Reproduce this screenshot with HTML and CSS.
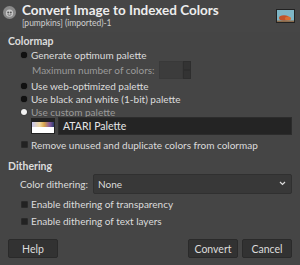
FILE: index.html
```html
<!DOCTYPE html>
<html>
	<head>
		<title>Convert Image to Indexed Colors</title>
		<link rel="stylesheet" href="styles.css">
	</head>
	<body>
		<div class="dialog">
			<div class="head">
				<div class="logo">
					<svg width="13" height="13" viewBox="0 0 13 13">
						<circle cx="6.5" cy="6.5" r="6.5" fill="#8a8a8a"/>
						<circle cx="6.5" cy="7.2" r="3.6" fill="#c9c9c9"/>
						<circle cx="5.2" cy="6.4" r="1" fill="#555"/>
						<circle cx="7.8" cy="6.4" r="1" fill="#555"/>
						<path d="M4.6 8.6 Q6.5 10 8.4 8.6" stroke="#555" stroke-width="0.8" fill="none"/>
					</svg>
				</div>
				<div class="titles">
					<div class="title">Convert Image to Indexed Colors</div>
					<div class="subtitle">[pumpkins] (imported)-1</div>
				</div>
				<div class="thumb">
					<svg width="19" height="14" viewBox="0 0 19 14">
						<rect x="0" y="0" width="19" height="14" fill="#222"/>
						<rect x="1" y="1" width="17" height="12" fill="#7fb6c6"/>
						<ellipse cx="8" cy="9" rx="5" ry="2.8" fill="#c2532a"/>
						<ellipse cx="12" cy="9.5" rx="3" ry="2" fill="#d86e32"/>
						<rect x="1" y="11.5" width="17" height="1.5" fill="#8a6a4a"/>
					</svg>
				</div>
			</div>

			<div class="section">Colormap</div>
			<div class="row radio-row gen"><span class="radio"></span>Generate optimum palette</div>
			<div class="row max-row">
				<span class="dim">Maximum number of colors:</span>
				<span class="spin">
					<span class="spin-field"></span>
					<span class="spin-btns"><span></span><span></span></span>
				</span>
			</div>
			<div class="row radio-row web"><span class="radio"></span>Use web-optimized palette</div>
			<div class="row radio-row"><span class="radio"></span>Use black and white (1-bit) palette</div>
			<div class="row radio-row dim"><span class="radio on"></span>Use custom palette</div>
			<div class="row palette-row">
				<span class="swatch"></span>
				<span class="palette-field">ATARI Palette</span>
			</div>
			<div class="row check-row remove-row"><span class="check"></span>Remove unused and duplicate colors from colormap</div>

			<div class="section dith">Dithering</div>
			<div class="row combo-row">
				<span class="combo-label">Color dithering:</span>
				<span class="combo">None
					<svg width="7" height="5" viewBox="0 0 7 5"><path d="M1 1 L3.5 3.5 L6 1" stroke="#dcdcdc" stroke-width="1.2" fill="none"/></svg>
				</span>
			</div>
			<div class="row check-row transp"><span class="check"></span>Enable dithering of transparency</div>
			<div class="row check-row"><span class="check"></span>Enable dithering of text layers</div>

			<div class="buttons">
				<button type="button">Help</button>
				<div class="spacer"></div>
				<button type="button">Convert</button>
				<button type="button">Cancel</button>
			</div>
		</div>
	</body>
</html>
```

FILE: styles.css
```css
html, body{
	margin:0;
	padding:0;
	background-color:#454545;
}
.dialog{
	width:300px;
	height:265px;
	display:flex;
	flex-direction:column;
	font-family:Lato, "Open Sans", sans-serif;
	font-size:10px;
	color:#dcdcdc;
	box-sizing:border-box;
}
.head{
	display:flex;
	align-items:flex-start;
	padding:3px 5px 0 3px;
	height:32px;
	flex:none;
	box-sizing:border-box;
	background-color:#464646;
}
.logo{
	width:13px;
	height:13px;
	margin-top:3px;
	margin-right:6px;
}
.titles{
	flex:1;
}
.title{
	font-weight:bold;
	font-size:13.5px;
	line-height:15px;
	color:#ededed;
}
.subtitle{
	font-size:8.5px;
	line-height:11px;
	color:#cfcfcf;
}
.thumb{
	margin-top:6px;
}
.section{
	flex:none;
	display:flex;
	align-items:center;
	font-weight:bold;
	font-size:10.5px;
	padding-left:8px;
	height:18px;
}
.dith{
	height:18px;
	align-items:flex-end;
	line-height:14px;
}
.row{
	flex:none;
	display:flex;
	align-items:center;
	padding-left:21px;
	white-space:nowrap;
}
.radio-row{
	height:13px;
}
.gen{
	height:10px;
}
.web{
	height:13px;
}
.radio{
	width:6px;
	height:6px;
	border-radius:50%;
	background-color:#111;
	margin-right:4px;
	box-shadow:0 0 1px #000;
}
.radio.on{
	background-color:#f2f2f2;
}
.dim{
	color:#9a9a9a;
}
.max-row{
	height:19px;
	padding-left:32px;
}
.spin{
	display:flex;
	margin-left:4px;
	height:18px;
}
.spin-field{
	width:22px;
	background-color:#3c3c3c;
	border:1px solid #393939;
}
.spin-btns{
	display:flex;
	flex-direction:column;
	width:8px;
}
.spin-btns span{
	flex:1;
	background-color:#333;
	border:1px solid #2e2e2e;
}
.palette-row{
	padding-left:31px;
	height:16px;
}
.swatch{
	width:22px;
	height:14px;
	margin-right:3px;
	border:1px solid #222;
	background:linear-gradient(to bottom, #222 0%, #222 20%, transparent 20%, transparent 55%, #fff 55%),
		linear-gradient(to right, #c7c7f0 0%, #f0d8a0 35%, #d9a54a 55%, #8a5aa0 80%, #2a3a6a 100%);
}
.palette-field{
	flex:1;
	height:18px;
	line-height:17px;
	background-color:#242424;
	margin-right:8px;
	padding-left:4px;
	font-size:10.5px;
	color:#e6e6e6;
	border:1px solid #2c2c2c;
	box-sizing:border-box;
}
.check-row{
	height:14px;
}
.remove-row{
	height:21px;
}
.transp{
	height:20px;
}
.check{
	width:5px;
	height:5px;
	background-color:#222;
	border:1px solid #2a2a2a;
	border-radius:1px;
	margin-right:3px;
}
.combo-row{
	padding-left:20px;
	height:21px;
}
.combo-label{
	margin-right:5px;
}
.combo{
	flex:1;
	display:flex;
	justify-content:space-between;
	align-items:center;
	height:20px;
	background-color:#383838;
	border:1px solid #303030;
	border-radius:2px;
	margin-right:8px;
	padding:0 5px 0 4px;
	box-sizing:border-box;
}
.buttons{
	display:flex;
	gap:4px;
	padding:0 8px;
	margin-top:auto;
	margin-bottom:7px;
}
.spacer{
	flex:1;
}
button{
	width:50px;
	height:19px;
	background-color:#323232;
	border:1px solid #2a2a2a;
	border-radius:2px;
	color:#dcdcdc;
	font-family:Lato, "Open Sans", sans-serif;
	font-size:10.5px;
	padding:0;
}
```
